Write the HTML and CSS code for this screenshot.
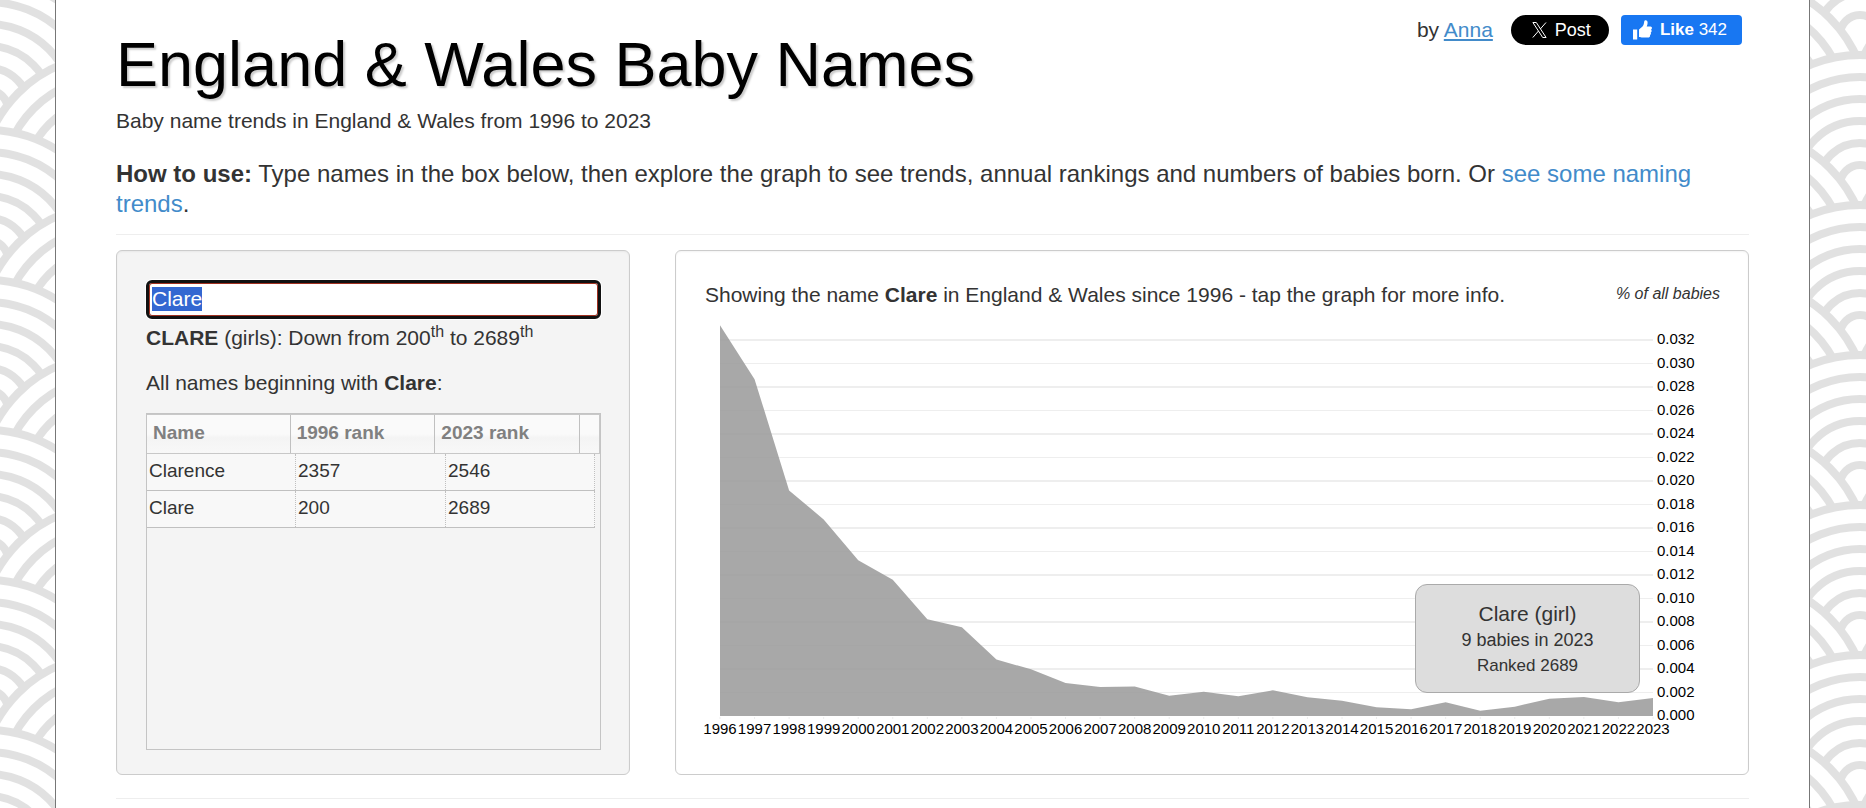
FILE: index.html
```html
<!DOCTYPE html>
<html lang="en">
<head>
  <meta charset="UTF-8">
  <meta name="viewport" content="width=device-width, initial-scale=1.0">
  <title>England &amp; Wales Baby Names</title>
  <link rel="stylesheet" href="styles.css">
</head>
<body>
  <div class="page">
    <header class="masthead">
      <div>
        <h1>England &amp; Wales Baby Names</h1>
        <p class="tagline">Baby name trends in England &amp; Wales from 1996 to 2023</p>
      </div>
      <div class="share">
        <span class="byline">by <a href="#">Anna</a></span>
        <button type="button" class="post-btn">
          <svg width="15" height="16" viewBox="0 0 15 16" aria-hidden="true"><path fill="none" stroke="#fff" d="M.9.5h3.400l9.800 15h-3.400zM14 .5L8.300 7M6.500 9L.8 15.500"/></svg>
          Post
        </button>
        <button type="button" class="like-btn">
          <svg width="20" height="20" viewBox="0 0 20 20" aria-hidden="true"><path fill="#fff" d="M0 9.500h4.200V19.500H0zM6 9.500l3.500-3C11 5 10.800 3 11.300 1.200 11.700-.3 14.600-.3 14.600 2.500c0 2-.5 3-.9 4h3.700c1.900 0 2 2.500.7 3 .9 1 .6 2.500-.4 3 .6 1 .2 2.200-.7 2.500.4 1.400-.5 2.500-1.900 2.500h-5.300C8 17.500 7.500 17 6 17z"/></svg>
          <span><b>Like</b> 342</span>
        </button>
      </div>
    </header>

    <p class="howto"><strong>How to use:</strong> Type names in the box below, then explore the graph to see trends, annual rankings and numbers of babies born. Or <a href="#">see some naming trends</a>.</p>
    <hr>

    <main class="columns">
      <section class="well search">
        <input type="text" id="nameInput" class="name-input" value="Clare" aria-label="Name" autocomplete="off" spellcheck="false">
        <p><strong>CLARE</strong> (girls): Down from 200<sup>th</sup> to 2689<sup>th</sup></p>
        <p>All names beginning with <strong>Clare</strong>:</p>
        <div class="names-box">
          <table class="names">
            <thead>
              <tr><th>Name</th><th>1996 rank</th><th>2023 rank</th><th></th></tr>
            </thead>
            <tbody>
              <tr><td>Clarence</td><td>2357</td><td>2546</td></tr>
              <tr><td>Clare</td><td>200</td><td>2689</td></tr>
            </tbody>
          </table>
        </div>
      </section>

      <section class="well graph">
        <div class="graph-head">
          <p>Showing the name <strong>Clare</strong> in England &amp; Wales since 1996 - tap the graph for more info.</p>
          <em>% of all babies</em>
        </div>
        <div class="chart-wrap">
          <svg id="chart" class="chart" viewBox="0 0 1015 425"></svg>
          <div class="tip">
            <div class="tip-name">Clare (girl)</div>
            <div class="tip-count">9 babies in 2023</div>
            <div class="tip-rank">Ranked 2689</div>
          </div>
        </div>
      </section>
    </main>
    <hr>
  </div>
  <script src="script.js"></script>
</body>
</html>
```
FILE: styles.css
```css
:root {
  /* overlapping wave circles, one 244 x 150 tile */
  --waves: url("data:image/svg+xml,%3Csvg xmlns='http://www.w3.org/2000/svg' xmlns:xlink='http://www.w3.org/1999/xlink' width='244' height='150'%3E%3Cdefs%3E%3Cg id='c' fill='none' stroke='%23e1e1e1' stroke-width='8'%3E%3Ccircle r='130' fill='%23fff'/%3E%3Ccircle r='108'/%3E%3Ccircle r='86'/%3E%3Ccircle r='64'/%3E%3Ccircle r='42'/%3E%3Ccircle r='20'/%3E%3C/g%3E%3Cg id='a'%3E%3Cuse xlink:href='%23c' x='-134'/%3E%3Cuse xlink:href='%23c' x='110'/%3E%3Cuse xlink:href='%23c' x='354'/%3E%3C/g%3E%3Cg id='b'%3E%3Cuse xlink:href='%23c' x='-12'/%3E%3Cuse xlink:href='%23c' x='232'/%3E%3C/g%3E%3C/defs%3E%3Cuse xlink:href='%23a' y='-115'/%3E%3Cuse xlink:href='%23b' y='-40'/%3E%3Cuse xlink:href='%23a' y='35'/%3E%3Cuse xlink:href='%23b' y='110'/%3E%3Cuse xlink:href='%23a' y='185'/%3E%3Cuse xlink:href='%23b' y='260'/%3E%3C/svg%3E");
}
* {
  box-sizing: border-box;
}
body {
  margin: 0;
  background: var(--waves) left top repeat-y, var(--waves) right -128px top repeat-y #fff;
  font-family: "Liberation Sans", Arial, sans-serif;
  font-size: 21px;
  line-height: 30px;
  color: #333;
}
a {
  color: #428bca;
  text-decoration: none;
}
p {
  margin: 0 0 15px;
}
hr {
  margin: 15px 0 0;
  border: 0;
  border-top: 1px solid #eee;
}
.page {
  margin: 0 56px 0 55px;
  padding: 0 60px;
  min-height: 100vh;
  background: #fff;
  border: solid #777;
  border-width: 0 1px;
}

/* header */
.masthead {
  display: flex;
  justify-content: space-between;
  align-items: flex-start;
  padding-top: 29px;
}
h1 {
  margin: 0 0 7px;
  font-size: 63px;
  font-weight: normal;
  line-height: 70px;
  color: #000;
  text-shadow: 2px 2px 2px #ccc;
}
.tagline {
  margin-bottom: 23px;
}
.share {
  display: flex;
  align-items: center;
  gap: 12px;
  margin: -14px 7px 0 0;
}
.byline {
  margin-right: 6px;
}
.byline a {
  text-decoration: underline;
}
.post-btn,
.like-btn {
  display: flex;
  align-items: center;
  height: 30px;
  border: 0;
  font-family: inherit;
  color: #fff;
  cursor: pointer;
}
.post-btn {
  gap: 8px;
  padding: 0 18px 0 21px;
  border-radius: 15px;
  background: #000;
  font-size: 18px;
}
.like-btn {
  gap: 7px;
  padding: 0 15px 0 12px;
  border-radius: 4px;
  background: #1877f2;
  font-size: 17px;
}
.howto {
  margin: 0;
  font-size: 24px;
}

/* two panels */
.columns {
  display: grid;
  grid-template-columns: 514fr 1074fr;
  gap: 45px;
  margin: 15px 0 23px;
}
.well {
  padding: 29px;
  border: 1px solid #ccc;
  border-radius: 6px;
  background: #fff;
  box-shadow: inset 0 1px 2px rgba(0,0,0,.05);
}
.search {
  display: flex;
  flex-direction: column;
  padding-right: 28px;
  background: #f4f4f4;
}
.name-input {
  width: 100%;
  height: 39px;
  padding: 0 3px 2px;
  border: 3px solid #111;
  border-radius: 6px;
  outline: 0;
  background: #fff;
  box-shadow: inset 0 0 0 1px #a03020, 0 0 0 1px #fff;
  font: inherit;
  color: #333;
}
.name-input::selection {
  background: #3367d1;
  color: #fff;
}
.name-input + p {
  margin-top: 4px;
}
sup {
  font-size: 16px;
  line-height: 0;
}

/* names table */
.names-box {
  flex: 1;
  margin-bottom: -5px;
  border: 1px solid #c4c4c4;
}
.names {
  display: block;
  font-size: 19px;
}
.names thead,
.names tbody {
  display: block;
}
.names tr {
  display: grid;
}
.names thead tr {
  grid-template-columns: 144fr 145fr 145fr 19fr;
  height: 40px;
  border: solid #c8c8c8;
  border-width: 1px 1px 1px 0;
  background: linear-gradient(#fafafa 50%, #f4f4f4 60%, #f8f8f8);
}
.names th {
  padding: 3px 6px;
  border-right: 1px solid #c0c0c0;
  text-align: left;
  color: #808080;
}
.names th:last-child {
  border: 0;
}
.names tbody tr {
  grid-template-columns: 149fr 150fr 149fr;
  height: 37px;
  margin-right: 5px;
  border-bottom: 1px solid #c0c0c0;
  background: #f8f8f8;
}
.names td {
  padding: 2px;
  border-right: 1px dotted #c0c0c0;
}

/* graph */
.graph {
  padding-right: 28px;
}
.graph-head {
  display: flex;
  justify-content: space-between;
  height: 40px;
}
.graph-head em {
  font-size: 16px;
  line-height: 28px;
}
.chart-wrap {
  position: relative;
}
.chart {
  display: block;
  width: 100%;
  overflow: visible;
}
.chart text {
  font-size: 15px;
  fill: #000;
}
.chart .year {
  text-anchor: middle;
}
.grid-line {
  stroke: #eee;
}
.area {
  fill: #999;
  fill-opacity: .85;
}
.tip {
  position: absolute;
  right: 80px;
  bottom: 52px;
  width: 225px;
  padding: 16px 10px 13px;
  border: 1px solid #aaa;
  border-radius: 12px;
  background: #ddd;
  text-align: center;
  line-height: 26px;
}
.tip-count {
  font-size: 18px;
}
.tip-rank {
  font-size: 17px;
}
```
FILE: script.js
```js
var input = document.getElementById('nameInput');
input.focus();
input.select();

// percentage of all babies, 1996 - 2023
var values = [0.03325, 0.02867, 0.0192, 0.01673, 0.01326, 0.0116, 0.00823, 0.00756, 0.00481, 0.00397,
  0.0028, 0.00247, 0.00252, 0.00173, 0.00207, 0.00168, 0.00219, 0.00159, 0.0013, 0.00074,
  0.00057, 0.00117, 0.00045, 0.00079, 0.00147, 0.00162, 0.00117, 0.00153];

var chart = document.getElementById('chart');
var left = 15, right = 948, base = 396, step = 23.5;
var out = '';

function x(i) {
  return left + i * (right - left) / (values.length - 1);
}
function y(v) {
  return base - v / 0.002 * step;
}

// gridlines and % labels
for (var g = 0; g <= 16; g++) {
  var gy = base - g * step;
  if (g > 0) {
    out += '<line class="grid-line" x1="' + left + '" x2="' + right + '" y1="' + gy + '" y2="' + gy + '" stroke-width="' + (g % 2 ? 1 : 2) + '"/>';
  }
  out += '<text x="952" y="' + Math.round(gy + 4) + '">' + (g * 0.002).toFixed(3) + '</text>';
}

// area
var points = values.map(function (v, i) { return x(i) + ',' + y(v); });
out += '<polygon class="area" points="' + left + ',' + base + ' ' + points.join(' ') + ' ' + right + ',' + base + '"/>';

// years
values.forEach(function (v, i) {
  out += '<line class="grid-line" x1="' + x(i) + '" x2="' + x(i) + '" y1="397" y2="399"/>';
  out += '<text class="year" x="' + x(i) + '" y="414">' + (1996 + i) + '</text>';
});

chart.innerHTML = out;
```
